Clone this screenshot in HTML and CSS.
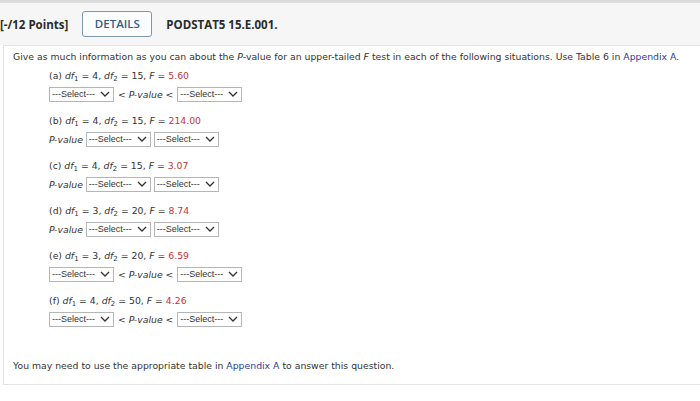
FILE: index.html
```html
<!DOCTYPE html>
<html lang="en">
<head>
    <meta charset="UTF-8">
    <title>PODSTAT5 15.E.001</title>
    <link rel="stylesheet" href="styles.css">
</head>
<body>
    <div class="topbar"></div>
    <div class="header">
        <span class="points">[-/12 Points]</span>
        <span class="details">DETAILS</span>
        <span class="code">PODSTAT5 15.E.001.</span>
    </div>

    <div class="question">
        <p class="intro">Give as much information as you can about the <i>P</i>-value for an upper-tailed <i>F</i> test in each of the following situations. Use Table 6 in <a href="#">Appendix A</a>.</p>

        <div class="part">
            <div class="given">(a) <i>df</i><sub>1</sub> = 4, <i>df</i><sub>2</sub> = 15, <i>F</i> = <span class="val">5.60</span></div>
            <div class="answer">
                <span class="sel">---Select---<svg viewBox="0 0 10 6"><path d="M1 1l4 4 4-4"/></svg></span>
                <span class="lt">&lt; <i>P-value</i> &lt;</span>
                <span class="sel">---Select---<svg viewBox="0 0 10 6"><path d="M1 1l4 4 4-4"/></svg></span>
            </div>
        </div>

        <div class="part">
            <div class="given">(b) <i>df</i><sub>1</sub> = 4, <i>df</i><sub>2</sub> = 15, <i>F</i> = <span class="val">214.00</span></div>
            <div class="answer">
                <i>P-value</i>
                <span class="sel">---Select---<svg viewBox="0 0 10 6"><path d="M1 1l4 4 4-4"/></svg></span>
                <span class="sel">---Select---<svg viewBox="0 0 10 6"><path d="M1 1l4 4 4-4"/></svg></span>
            </div>
        </div>

        <div class="part">
            <div class="given">(c) <i>df</i><sub>1</sub> = 4, <i>df</i><sub>2</sub> = 15, <i>F</i> = <span class="val">3.07</span></div>
            <div class="answer">
                <i>P-value</i>
                <span class="sel">---Select---<svg viewBox="0 0 10 6"><path d="M1 1l4 4 4-4"/></svg></span>
                <span class="sel">---Select---<svg viewBox="0 0 10 6"><path d="M1 1l4 4 4-4"/></svg></span>
            </div>
        </div>

        <div class="part">
            <div class="given">(d) <i>df</i><sub>1</sub> = 3, <i>df</i><sub>2</sub> = 20, <i>F</i> = <span class="val">8.74</span></div>
            <div class="answer">
                <i>P-value</i>
                <span class="sel">---Select---<svg viewBox="0 0 10 6"><path d="M1 1l4 4 4-4"/></svg></span>
                <span class="sel">---Select---<svg viewBox="0 0 10 6"><path d="M1 1l4 4 4-4"/></svg></span>
            </div>
        </div>

        <div class="part">
            <div class="given">(e) <i>df</i><sub>1</sub> = 3, <i>df</i><sub>2</sub> = 20, <i>F</i> = <span class="val">6.59</span></div>
            <div class="answer">
                <span class="sel">---Select---<svg viewBox="0 0 10 6"><path d="M1 1l4 4 4-4"/></svg></span>
                <span class="lt">&lt; <i>P-value</i> &lt;</span>
                <span class="sel">---Select---<svg viewBox="0 0 10 6"><path d="M1 1l4 4 4-4"/></svg></span>
            </div>
        </div>

        <div class="part">
            <div class="given">(f) <i>df</i><sub>1</sub> = 4, <i>df</i><sub>2</sub> = 50, <i>F</i> = <span class="val">4.26</span></div>
            <div class="answer">
                <span class="sel">---Select---<svg viewBox="0 0 10 6"><path d="M1 1l4 4 4-4"/></svg></span>
                <span class="lt">&lt; <i>P-value</i> &lt;</span>
                <span class="sel">---Select---<svg viewBox="0 0 10 6"><path d="M1 1l4 4 4-4"/></svg></span>
            </div>
        </div>

        <p class="note">You may need to use the appropriate table in <a href="#">Appendix A</a> to answer this question.</p>
    </div>
</body>
</html>
```

FILE: styles.css
```css
body {
    margin: 0;
    background: #fff;
    font-family: "DejaVu Sans", Verdana, sans-serif;
    color: #333;
    overflow: hidden;
}

.topbar {
    height: 3px;
    background: #dcdcdc;
}

.header {
    display: flex;
    align-items: center;
    height: 42px;
    background: #f6f6f6;
    font-family: "Open Sans", sans-serif;
    font-weight: bold;
    font-size: 11.5px;
    color: #2b2b2b;
}
.points {
    margin-left: 0;
}
.details {
    margin-left: 14px;
    width: 68px;
    height: 24px;
    line-height: 24px;
    text-align: center;
    border: 1px solid #7f98ad;
    border-radius: 3px;
    background: #fbfcfd;
    color: #325f86;
    font-weight: 600;
}
.code {
    margin-left: 14px;
}

.question {
    margin-left: 3px;
    height: 333px;
    border: 1px solid #e4e4e4;
    border-right: none;
    padding: 5px 0 0 9px;
    font-size: 9.3px;
    box-shadow: 0 1px 2px rgba(0, 0, 0, 0.06);
}
.question a {
    color: #2b3b98;
    text-decoration: none;
}
.intro {
    margin: 0 0 5px;
    line-height: 12px;
}

.part {
    margin-left: 36px;
    margin-bottom: 9px;
}
.given {
    height: 16px;
    line-height: 16px;
}
.given sub {
    font-size: 7px;
    vertical-align: -2px;
    line-height: 0;
}
.val {
    color: #c3343a;
}
.answer {
    display: flex;
    align-items: center;
    gap: 3px;
    height: 20px;
}
.lt {
    margin: 0 1px;
}

.sel {
    display: inline-flex;
    align-items: center;
    justify-content: space-between;
    box-sizing: border-box;
    width: 65px;
    height: 15px;
    padding: 0 3px 0 2px;
    border: 1px solid #b5b5b5;
    background: #fff;
    font-family: "Liberation Sans", Arial, sans-serif;
    font-size: 9px;
    color: #333;
}
.sel svg {
    width: 10px;
    height: 6px;
    fill: none;
    stroke: #333;
    stroke-width: 1.3;
}

.note {
    margin: 31px 0 0;
}
```
